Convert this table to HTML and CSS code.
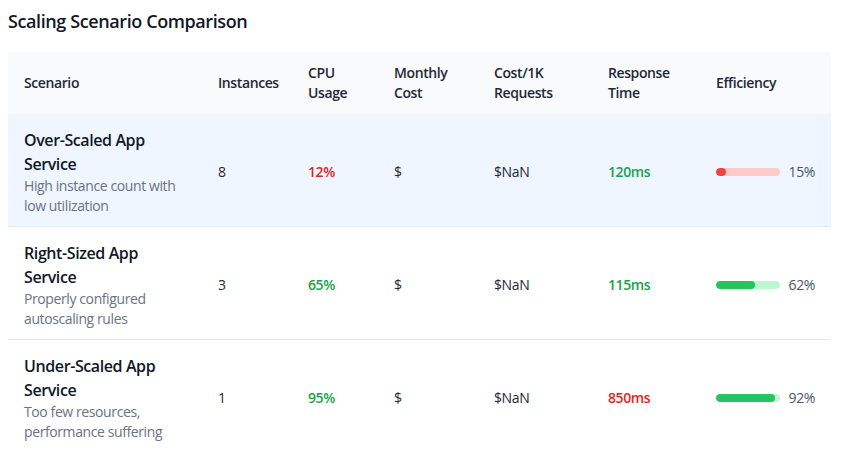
FILE: index.html
```html
<!DOCTYPE html>
<html>
<head>
<meta charset="utf-8">
<link rel="stylesheet" href="styles.css">
</head>
<body>
<h3 class="title">Scaling Scenario Comparison</h3>
<table class="cmp">
  <colgroup>
    <col class="c1"><col class="c2"><col class="c3"><col class="c4"><col class="c5"><col class="c6"><col class="c7">
  </colgroup>
  <thead>
    <tr>
      <th>Scenario</th>
      <th>Instances</th>
      <th>CPU<br>Usage</th>
      <th>Monthly<br>Cost</th>
      <th>Cost/1K<br>Requests</th>
      <th>Response<br>Time</th>
      <th>Efficiency</th>
    </tr>
  </thead>
  <tbody>
    <tr class="hl">
      <td><div class="name">Over-Scaled App Service</div><div class="desc">High instance count with low utilization</div></td>
      <td>8</td>
      <td class="bad strong">12%</td>
      <td>$</td>
      <td>$NaN</td>
      <td class="good strong">120ms</td>
      <td><div class="eff"><div class="track red"><div class="fill" style="width:15%"></div></div><span class="pct">15%</span></div></td>
    </tr>
    <tr>
      <td><div class="name">Right-Sized App Service</div><div class="desc">Properly configured autoscaling rules</div></td>
      <td>3</td>
      <td class="good strong">65%</td>
      <td>$</td>
      <td>$NaN</td>
      <td class="good strong">115ms</td>
      <td><div class="eff"><div class="track green"><div class="fill" style="width:62%"></div></div><span class="pct">62%</span></div></td>
    </tr>
    <tr>
      <td><div class="name">Under-Scaled App Service</div><div class="desc">Too few resources, performance suffering</div></td>
      <td>1</td>
      <td class="good strong">95%</td>
      <td>$</td>
      <td>$NaN</td>
      <td class="bad strong">850ms</td>
      <td><div class="eff"><div class="track green"><div class="fill" style="width:92%"></div></div><span class="pct">92%</span></div></td>
    </tr>
  </tbody>
</table>
</body>
</html>
```

FILE: styles.css
```css
body {
  margin: 8px;
  font-family: "Open Sans", "Noto Sans", sans-serif;
  color: #1f2937;
  background: #fff;
  letter-spacing: -0.025em;
}
.title {
  margin: 0 0 16px;
  font-size: 18px;
  line-height: 26px;
  padding-bottom: 2px;
  font-weight: 600;
  color: #111827;
}
.cmp {
  width: 823px;
  border-collapse: collapse;
  table-layout: fixed;
  font-size: 14px;
  line-height: 20px;
}
.c1 { width: 194px; }
.c2 { width: 90px; }
.c3 { width: 86px; }
.c4 { width: 100px; }
.c5 { width: 114px; }
.c6 { width: 108px; }
.c7 { width: 131px; }
thead tr { background: #f8fafc; }
th {
  text-align: left;
  font-weight: 600;
  padding: 11px 16px;
  color: #1f2937;
  vertical-align: middle;
}
td {
  padding: 14px 16px 10px;
  vertical-align: middle;
  border-top: 1px solid #e5e7eb;
  color: #1f2937;
}
tbody tr:first-child td { border-top: none; }
tr.hl { background: #eff6ff; }
.name {
  font-size: 16px;
  line-height: 24px;
  font-weight: 600;
  color: #111827;
}
.desc {
  color: #6b7280;
}
.strong { font-weight: 600; }
.bad { color: #dc2626; }
.good { color: #16a34a; }
.eff {
  display: flex;
  align-items: center;
  gap: 9px;
}
.track {
  width: 64px;
  height: 8px;
  border-radius: 4px;
  overflow: hidden;
}
.fill { height: 100%; border-radius: 4px; }
.track.red { background: #fecaca; }
.track.red .fill { background: #ef4444; }
.track.green { background: #bbf7d0; }
.track.green .fill { background: #22c55e; }
.pct { color: #4b5563; }
```
